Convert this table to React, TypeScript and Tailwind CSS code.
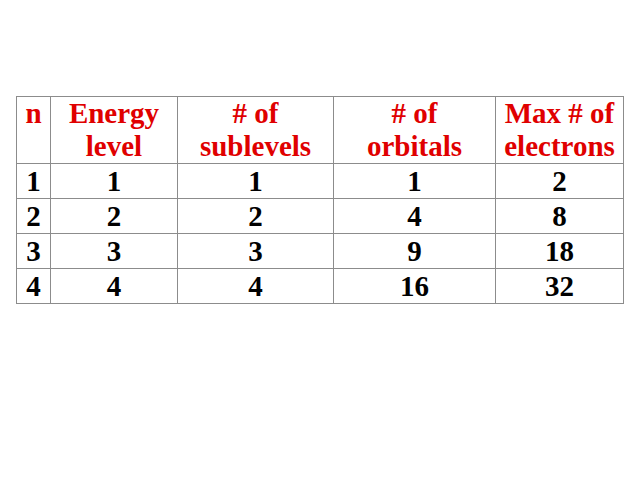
import React from "react";

const rows = [
  ["1", "1", "1", "1", "2"],
  ["2", "2", "2", "4", "8"],
  ["3", "3", "3", "9", "18"],
  ["4", "4", "4", "16", "32"],
];

const rowHeights = ["h-[35px]", "h-[34px]", "h-[35px]", "h-[35px]"];

export default function App() {
  return (
    <div
      className="w-[638px] h-[478px] bg-white pt-[96px] pl-[16px]"
      style={{ fontFamily: '"Liberation Serif", "Times New Roman", serif' }}
    >
      <table className="border-collapse table-fixed w-[607px] font-bold text-[29px] leading-[34px]">
        <colgroup>
          <col className="w-[34px]" />
          <col className="w-[127px]" />
          <col className="w-[156px]" />
          <col className="w-[162px]" />
          <col className="w-[128px]" />
        </colgroup>
        <thead>
          <tr className="h-[67px] text-[#e00000] leading-[33px]">
            <th className="border border-[#8c8c8c] align-top text-center p-0">n</th>
            <th className="border border-[#8c8c8c] align-top text-center p-0">
              Energy
              <br />
              level
            </th>
            <th className="border border-[#8c8c8c] align-top text-center p-0">
              # of
              <br />
              sublevels
            </th>
            <th className="border border-[#8c8c8c] align-top text-center p-0">
              # of
              <br />
              orbitals
            </th>
            <th className="border border-[#8c8c8c] align-top text-center p-0">
              Max # of
              <br />
              electrons
            </th>
          </tr>
        </thead>
        <tbody className="text-black">
          {rows.map((r, i) => (
            <tr key={i} className={rowHeights[i]}>
              {r.map((c, j) => (
                <td key={j} className="border border-[#8c8c8c] text-center align-middle p-0">
                  {c}
                </td>
              ))}
            </tr>
          ))}
        </tbody>
      </table>
    </div>
  );
}
